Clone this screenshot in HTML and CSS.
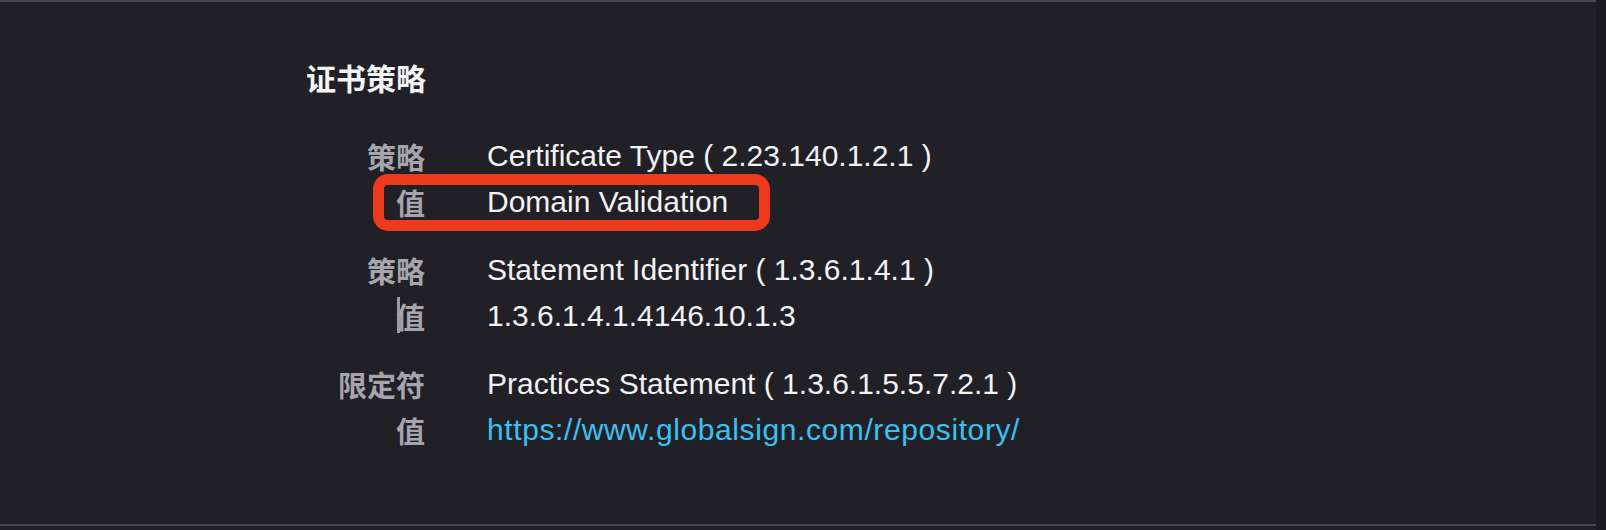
FILE: index.html
```html
<!DOCTYPE html>
<html lang="zh-CN">
<head>
<meta charset="utf-8">
<title>证书策略</title>
<link rel="stylesheet" href="styles.css">
</head>
<body>
<div class="window">
  <main class="panel">
    <div class="rule"></div>
    <section class="content">
      <h2 class="title">证书策略</h2>
      <div class="group">
        <div class="row">
          <span class="label">策略</span>
          <span class="value">Certificate Type ( 2.23.140.1.2.1 )</span>
        </div>
        <div class="row row-marked">
          <span class="label">值</span>
          <span class="value">Domain Validation</span>
        </div>
      </div>
      <div class="group">
        <div class="row">
          <span class="label">策略</span>
          <span class="value">Statement Identifier ( 1.3.6.1.4.1 )</span>
        </div>
        <div class="row row-cursor">
          <span class="label">值</span>
          <span class="value">1.3.6.1.4.1.4146.10.1.3</span>
        </div>
      </div>
      <div class="group">
        <div class="row">
          <span class="label">限定符</span>
          <span class="value">Practices Statement ( 1.3.6.1.5.5.7.2.1 )</span>
        </div>
        <div class="row">
          <span class="label">值</span>
          <span class="value link">https://www.globalsign.com/repository/</span>
        </div>
      </div>
    </section>
    <div class="rule"></div>
  </main>
  <div class="strip"></div>
</div>
</body>
</html>
```
FILE: styles.css
```css
html, body {
  margin: 0;
  padding: 0;
  background: #212026;
}
body {
  font-family: "Liberation Sans", "Noto Sans CJK SC", sans-serif;
  overflow: hidden;
}
.window {
  display: flex;
  width: 1606px;
  height: 530px;
}
.panel {
  width: 1596px;
  display: flex;
  flex-direction: column;
  background: #212026;
}
.rule {
  height: 2px;
  background: #48474d;
  flex: none;
}
.content {
  height: 522px;
  box-sizing: border-box;
  padding-top: 57px;
  display: flex;
  flex-direction: column;
}
.strip {
  width: 10px;
  background: #1b1a1f;
}
.title {
  margin: 0 0 38px 306px;
  font-family: "Noto Sans CJK SC", sans-serif;
  font-size: 30px;
  font-weight: 700;
  line-height: 36px;
  color: #f4f4f6;
}
.group {
  display: flex;
  flex-direction: column;
  margin-bottom: 22px;
}
.row {
  position: relative;
  display: grid;
  grid-template-columns: 425px 1fr;
  column-gap: 62px;
  height: 46px;
  align-items: center;
}
.label {
  text-align: right;
  font-family: "Noto Sans CJK SC", sans-serif;
  font-weight: 700;
  font-size: 29px;
  line-height: 46px;
  color: #a6a5ac;
}
.value {
  font-size: 30px;
  line-height: 46px;
  color: #f2f2f4;
  white-space: nowrap;
}
.link {
  color: #3ac0f1;
  letter-spacing: 0.6px;
}
.row-marked::after {
  content: "";
  position: absolute;
  left: 373px;
  top: -5px;
  width: 397px;
  height: 57px;
  box-sizing: border-box;
  border: 11px solid #ee3a1c;
  border-radius: 15px;
  pointer-events: none;
}
.row-cursor::before {
  content: "";
  position: absolute;
  left: 397px;
  top: 4px;
  width: 3px;
  height: 36px;
  background: #9e9da4;
}
```
